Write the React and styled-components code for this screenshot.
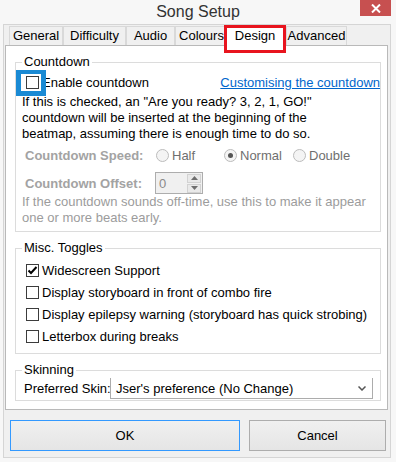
import React from 'react';
import styled, { createGlobalStyle } from 'styled-components';

const GlobalStyle = createGlobalStyle`
  html, body {
    margin: 0;
    padding: 0;
    background: #f7f7f7;
  }

  body {
    font-family: "Liberation Sans", Arial, sans-serif;
    font-size: 13px;
    color: #000;
  }
`;

const Window = styled.div`
  width: 396px;
  height: 462px;
  display: flex;
  flex-direction: column;
  background: #f7f7f7;
  overflow: hidden;
`;

const TitleBar = styled.div`
  height: 24px;
  display: grid;
  grid-template-columns: 1fr auto 1fr;
  align-items: start;
`;

const Title = styled.div`
  grid-column: 2;
  font-size: 16px;
  line-height: 24px;
  color: #333;
`;

const CloseButton = styled.div`
  grid-column: 3;
  justify-self: end;
  margin-right: 5px;
  width: 31px;
  height: 16px;
  background: #c75050;
  display: grid;
  place-items: center;
`;

const Frame = styled.div`
  flex: 1;
  margin: 0 5px 4px 3px;
  padding: 0 2px 6px 1px;
  border: 1px solid #d5d5d5;
  background: #f0f0f0;
  display: flex;
  flex-direction: column;
`;

const TabStrip = styled.div`
  display: flex;
  align-items: flex-end;
  padding-left: 4px;
`;

const Tab = styled.div`
  box-sizing: border-box;
  width: ${p => p.$w}px;
  height: 19px;
  border: 1px solid #d9d9d9;
  border-bottom: none;
  background: #f0f0f0;
  text-align: center;
  line-height: 18px;
  white-space: nowrap;
`;

const ActiveTab = styled.div`
  box-sizing: border-box;
  position: relative;
  z-index: 1;
  width: 62px;
  height: 28px;
  margin: 0 0 -8px -4px;
  border: 3px solid #e8141e;
  background: #fff;
  text-align: center;
  line-height: 16px;
  padding-bottom: 6px;
`;

const Panel = styled.div`
  border: 1px solid #b9b9b9;
  background: #fff;
  padding: 8px 6px 8px 9px;
  display: flex;
  flex-direction: column;
  gap: 8px;
`;

const Group = styled.fieldset`
  margin: 0;
  padding: 0 0 ${p => p.$pb || 0}px;
  border: 1px solid #dcdcdc;
  min-width: 0;
  overflow: hidden;
`;

const Legend = styled.legend`
  margin-left: 6px;
  padding: 0 2px;
  line-height: 16px;
`;

const EnableRow = styled.div`
  position: relative;
  height: 16px;
  margin-top: 4px;
  padding-left: 10px;
  display: flex;
  align-items: center;
  justify-content: space-between;
`;

const Highlight = styled.span`
  position: absolute;
  left: 0;
  top: -5px;
  width: 30px;
  height: 27px;
  box-sizing: border-box;
  border: 5px solid #1a8ad4;
`;

const CheckLabel = styled.label`
  display: flex;
  align-items: center;
  gap: 3px;
  white-space: nowrap;
`;

const Box = styled.span`
  box-sizing: border-box;
  width: 13px;
  height: 13px;
  border: 1px solid #3c3c3c;
  background: #fff;
  display: grid;
  place-items: center;
  flex: none;
`;

const Link = styled.a`
  color: #0066cc;
  text-decoration: underline;
  white-space: nowrap;
`;

const Paragraph = styled.div`
  margin-top: ${p => p.$mt || 0}px;
  padding-left: 6px;
  line-height: 16px;
  white-space: nowrap;
  color: ${p => (p.$muted ? '#9c9c9c' : '#000')};
`;

const FieldRow = styled.div`
  display: grid;
  grid-template-columns: ${p => p.$cols};
  align-items: center;
  height: ${p => p.$h}px;
  margin-top: ${p => p.$mt}px;
  padding-left: 9px;
`;

const FieldLabel = styled.span`
  font-weight: bold;
  color: #a3a3a3;
  white-space: nowrap;
`;

const RadioOption = styled.label`
  display: flex;
  align-items: center;
  gap: 3px;
  color: #6f6f6f;
`;

const Radio = styled.span`
  box-sizing: border-box;
  width: 13px;
  height: 13px;
  border-radius: 50%;
  border: 1px solid #bcbcbc;
  background: #f4f4f4;
  display: grid;
  place-items: center;

  &::after {
    content: '';
    width: 5px;
    height: 5px;
    border-radius: 50%;
    background: ${p => (p.$on ? '#555' : 'transparent')};
  }
`;

const Spin = styled.div`
  box-sizing: border-box;
  width: 48px;
  height: 22px;
  border: 1px solid #adadad;
  background: #f0f0f0;
  display: flex;
  align-items: center;
  justify-content: space-between;
  padding: 1px 1px 1px 3px;
  color: #8a8a8a;
`;

const SpinButtons = styled.div`
  display: flex;
  flex-direction: column;
  gap: 1px;
`;

const SpinButton = styled.span`
  box-sizing: border-box;
  width: 14px;
  height: 9px;
  border: 1px solid #d2d2d2;
  background: #e9e9e9;
  display: grid;
  place-items: center;
`;

const CheckList = styled.div`
  margin-top: 3px;
  display: flex;
  flex-direction: column;
`;

const CheckRow = styled.div`
  height: 22px;
  padding-left: 10px;
  display: flex;
  align-items: center;
`;

const SkinRow = styled.div`
  margin-top: -1px;
  padding: 0 7px 0 8px;
  display: flex;
  align-items: center;
`;

const SkinLabel = styled.span`
  width: 86px;
  white-space: nowrap;
`;

const Select = styled.div`
  flex: 1;
  box-sizing: border-box;
  height: 22px;
  border: 1px solid #acacac;
  background: #fff;
  padding: 0 6px 0 5px;
  display: flex;
  align-items: center;
  justify-content: space-between;
`;

const ButtonRow = styled.div`
  margin-top: auto;
  padding-left: 5px;
  display: grid;
  grid-template-columns: 230px 137px;
  gap: 9px;
`;

const Button = styled.div`
  box-sizing: border-box;
  height: 31px;
  border: 1px solid ${p => (p.$default ? '#3399ff' : '#adadad')};
  background: linear-gradient(#f0f0f0, #e5e5e5);
  display: grid;
  place-items: center;
`;

const Check = ({ checked }) => (
  <Box>
    {checked && (
      <svg width="11" height="11" viewBox="0 0 11 11">
        <path d="M1.5 5.5 L4 8 L9.5 2" fill="none" stroke="#000" strokeWidth="2" />
      </svg>
    )}
  </Box>
);

const Arrow = ({ up }) => (
  <svg width="7" height="4" viewBox="0 0 7 4">
    <path d={up ? 'M0 4 L3.5 0 L7 4 Z' : 'M0 0 L3.5 4 L7 0 Z'} fill="#6e6e6e" />
  </svg>
);

const tabs = [
  { label: 'General', w: 54 },
  { label: 'Difficulty', w: 63 },
  { label: 'Audio', w: 49 },
  { label: 'Colours', w: 53 },
];

const toggles = [
  { label: 'Widescreen Support', checked: true },
  { label: 'Display storyboard in front of combo fire' },
  { label: 'Display epilepsy warning (storyboard has quick strobing)' },
  { label: 'Letterbox during breaks' },
];

const App = () => (
  <Window>
    <GlobalStyle />
    <TitleBar>
      <Title>Song Setup</Title>
      <CloseButton>
        <svg width="10" height="9" viewBox="0 0 10 9">
          <path d="M1 0.5 L9 8.5 M9 0.5 L1 8.5" stroke="#fff" strokeWidth="2" />
        </svg>
      </CloseButton>
    </TitleBar>
    <Frame>
      <TabStrip>
        {tabs.map(t => (
          <Tab key={t.label} $w={t.w}>{t.label}</Tab>
        ))}
        <ActiveTab>Design</ActiveTab>
        <Tab $w={61}>Advanced</Tab>
      </TabStrip>
      <Panel>
        <Group $pb={5}>
          <Legend>Countdown</Legend>
          <EnableRow>
            <CheckLabel>
              <Check />
              Enable countdown
            </CheckLabel>
            <Link>Customising the countdown</Link>
            <Highlight />
          </EnableRow>
          <Paragraph $mt={4}>
            If this is checked, an "Are you ready? 3, 2, 1, GO!"<br />
            countdown will be inserted at the beginning of the<br />
            beatmap, assuming there is enough time to do so.
          </Paragraph>
          <FieldRow $cols="131px 68px 69px auto" $h={16} $mt={5}>
            <FieldLabel>Countdown Speed:</FieldLabel>
            <RadioOption><Radio />Half</RadioOption>
            <RadioOption><Radio $on />Normal</RadioOption>
            <RadioOption><Radio />Double</RadioOption>
          </FieldRow>
          <FieldRow $cols="130px 48px" $h={22} $mt={9}>
            <FieldLabel>Countdown Offset:</FieldLabel>
            <Spin>
              0
              <SpinButtons>
                <SpinButton><Arrow up /></SpinButton>
                <SpinButton><Arrow /></SpinButton>
              </SpinButtons>
            </Spin>
          </FieldRow>
          <Paragraph $muted>
            If the countdown sounds off-time, use this to make it appear<br />
            one or more beats early.
          </Paragraph>
        </Group>
        <Group $pb={6}>
          <Legend>Misc. Toggles</Legend>
          <CheckList>
            {toggles.map(t => (
              <CheckRow key={t.label}>
                <CheckLabel>
                  <Check checked={t.checked} />
                  {t.label}
                </CheckLabel>
              </CheckRow>
            ))}
          </CheckList>
        </Group>
        <Group $pb={1}>
          <Legend>Skinning</Legend>
          <SkinRow>
            <SkinLabel>Preferred Skin:</SkinLabel>
            <Select>
              Jser's preference (No Change)
              <svg width="8" height="5" viewBox="0 0 8 5">
                <path d="M0.5 0.5 L4 4 L7.5 0.5" fill="none" stroke="#555" strokeWidth="1.5" />
              </svg>
            </Select>
          </SkinRow>
        </Group>
      </Panel>
      <ButtonRow>
        <Button $default>OK</Button>
        <Button>Cancel</Button>
      </ButtonRow>
    </Frame>
  </Window>
);

export default App;
